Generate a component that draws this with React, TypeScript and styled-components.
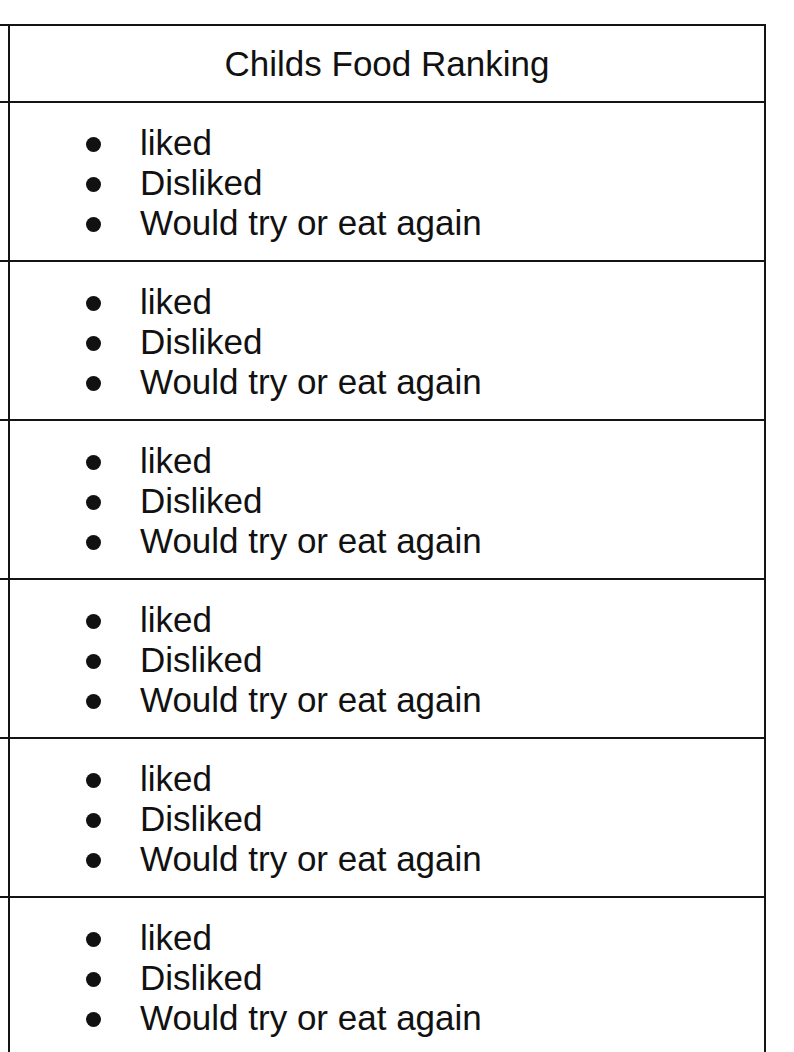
import styled, { createGlobalStyle } from "styled-components";

const GlobalStyle = createGlobalStyle`
  html, body {
    margin: 0;
    padding: 0;
    background: #fff;
  }
  body {
    font-family: "Liberation Sans", Arial, sans-serif;
    color: #111;
    overflow: hidden;
  }
`;

const Page = styled.div`
  width: 794px;
  height: 1052px;
  overflow: hidden;
  padding-top: 24px;
  box-sizing: border-box;
`;

// the first column is cut off by the screenshot, only 8px of it shows
const Sheet = styled.table`
  border-collapse: collapse;
  table-layout: fixed;
  margin-left: -190px;
  width: 954px;
`;

const Cell = styled.td<{ $header?: boolean }>`
  border: 2px solid #141414;
  padding: 0;
  vertical-align: top;
  height: ${({ $header }) => ($header ? "75px" : "157px")};
  font-size: 35px;
  line-height: 40px;
  ${({ $header }) =>
    $header &&
    `
    text-align: center;
    vertical-align: middle;
    font-weight: normal;
  `}
`;

const List = styled.ul`
  list-style: none;
  margin: 0;
  padding: 20px 0 0 130px;
`;

const Item = styled.li`
  position: relative;
  height: 40px;
  &::before {
    content: "";
    position: absolute;
    left: -54px;
    top: 14px;
    width: 15px;
    height: 15px;
    border-radius: 50%;
    background: #111;
  }
`;

const choices = ["liked", "Disliked", "Would try or eat again"];

export default function App() {
  return (
    <Page>
      <GlobalStyle />
      <Sheet>
        <colgroup>
          <col style={{ width: 198 }} />
          <col style={{ width: 756 }} />
        </colgroup>
        <tbody>
          <tr>
            <Cell $header />
            <Cell $header>Childs Food Ranking</Cell>
          </tr>
          {Array.from({ length: 6 }).map((_, i) => (
            <tr key={i}>
              <Cell />
              <Cell>
                <List>
                  {choices.map((c) => (
                    <Item key={c}>{c}</Item>
                  ))}
                </List>
              </Cell>
            </tr>
          ))}
        </tbody>
      </Sheet>
    </Page>
  );
}
